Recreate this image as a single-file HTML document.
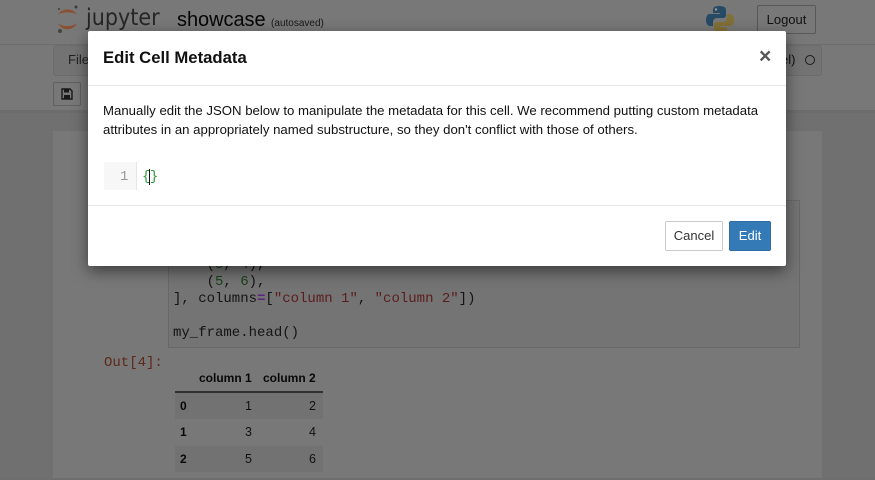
<!DOCTYPE html>
<html>
<head>
<meta charset="utf-8">
<style>
html,body{margin:0;padding:0;width:875px;height:480px;overflow:hidden;background:#707070;font-family:"Liberation Sans",sans-serif;}
.a{position:absolute;box-sizing:border-box;}
.mono{font-family:"Liberation Mono",monospace;font-size:14px;line-height:17px;white-space:pre;color:#141414;}
.t{font-size:12.500px;line-height:15px;color:#111;}
.b{font-size:12px;line-height:15px;font-weight:bold;color:#080808;}
</style>
</head>
<body>
<!-- background notebook -->
<div class="a" style="left:0;top:0;width:875px;height:111px;background:#787878;"></div>
<div class="a" style="left:0;top:44px;width:875px;height:1px;background:#6e6e6e;"></div>
<div class="a" style="left:0;top:110px;width:875px;height:3px;background:#6c6c6c;"></div>
<div class="a" style="left:53px;top:131px;width:769px;height:349px;background:#787878;"></div>

<!-- logo -->
<svg class="a" style="left:55px;top:4px" width="32" height="32" viewBox="0 0 32 32">
<path d="M3 11 C7 3.500 18 3.500 22 11 C18 7.500 7 7.500 3 11Z" fill="#8a5030"/>
<path d="M3 19 C7 27.500 18 27.500 22 19 C18 23 7 23 3 19Z" fill="#8a5030"/>
<circle cx="21" cy="3" r="1.500" fill="#3c3c3c"/>
<circle cx="4" cy="5" r="1" fill="#3c3c3c"/>
<circle cx="5" cy="27" r="2" fill="#444"/>
</svg>
<div class="a" style="left:86px;top:2px;font-size:23px;line-height:32px;color:#262626;font-family:'DejaVu Sans',sans-serif;transform:scaleX(.9);transform-origin:0 0;white-space:nowrap;">jupyter</div>
<div class="a" style="left:177px;top:7px;font-size:20px;line-height:26px;color:#050505;white-space:nowrap;letter-spacing:-.05px;">showcase <span style="font-size:10px;color:#181818;letter-spacing:0;">(autosaved)</span></div>

<!-- python logo -->
<svg class="a" style="left:705px;top:5px" width="30" height="30" viewBox="0 0 30 30">
<path d="M14 1 C9 1 8 3 8 5 V8 H15 V9 H5 C2 9 1 12 1 15 C1 19 3 21 5 21 H8 V17 C8 14.500 10 13 12 13 H18 C20 13 21 12 21 10 V5 C21 2 18 1 14 1Z" fill="#274a64"/>
<path d="M16 29 C21 29 22 27 22 25 V22 H15 V21 H25 C28 21 29 18 29 15 C29 11 27 9 25 9 H22 V13 C22 15.500 20 17 18 17 H12 C10 17 9 18 9 20 V25 C9 28 12 29 16 29Z" fill="#807036"/>
<circle cx="11" cy="4.500" r="1.200" fill="#999"/>
</svg>
<div class="a" style="left:757px;top:5px;width:59px;height:29px;border:1px solid #585858;border-radius:2px;font-size:13px;line-height:27px;text-align:center;color:#111;">Logout</div>

<!-- menu bar -->
<div class="a" style="left:53px;top:45px;width:769px;height:31px;background:#737373;border:1px solid #6c6c6c;border-radius:3px;"></div>
<div class="a" style="left:68px;top:52px;font-size:13px;line-height:16px;color:#222;">File</div>
<div class="a" style="left:781px;top:52px;font-size:13px;line-height:16px;color:#111;">el)</div>
<div class="a" style="left:805px;top:55px;width:10px;height:10px;border:1.500px solid #1c1c1c;border-radius:50%;"></div>
<!-- save button -->
<div class="a" style="left:53px;top:82px;width:28px;height:24px;background:#787878;border:1px solid #606060;border-radius:2px;"></div>
<svg class="a" style="left:61px;top:88px" width="12" height="12" viewBox="0 0 12 12"><path d="M1 1H9L11 3V11H1Z" fill="none" stroke="#181818" stroke-width="1.400"/><path d="M3 1.500H8V4.500H3ZM3 7H9V10.500H3Z" fill="#181818"/></svg>

<!-- cell -->
<div class="a" style="left:168px;top:200px;width:632px;height:148px;background:#747474;border:1px solid #686868;"></div>
<div class="a mono" style="left:173px;top:257px;">    (<span style="color:#1a401a">3</span>, <span style="color:#1a401a">4</span>),
    (<span style="color:#1a401a">5</span>, <span style="color:#1a401a">6</span>),
], columns<span style="color:#5c2480;font-weight:bold">=</span>[<span style="color:#5c1c1c">"column 1"</span>, <span style="color:#5c1c1c">"column 2"</span>])

my_frame.head()</div>
<div class="a mono" style="left:104px;top:355px;color:#5e281a;">Out[4]:</div>

<!-- table -->
<div class="a" style="left:175px;top:391px;width:148px;height:2px;background:#303030;"></div>
<div class="a" style="left:175px;top:393px;width:148px;height:26px;background:#727272;"></div>
<div class="a" style="left:175px;top:446px;width:148px;height:26px;background:#727272;"></div>
<div class="a b" style="left:199px;top:371px;">column 1</div>
<div class="a b" style="left:263px;top:371px;">column 2</div>
<div class="a b" style="left:180px;top:399px;">0</div>
<div class="a t" style="left:245px;top:399px;">1</div>
<div class="a t" style="left:309px;top:399px;">2</div>
<div class="a b" style="left:180px;top:425px;">1</div>
<div class="a t" style="left:245px;top:425px;">3</div>
<div class="a t" style="left:309px;top:425px;">4</div>
<div class="a b" style="left:180px;top:452px;">2</div>
<div class="a t" style="left:245px;top:452px;">5</div>
<div class="a t" style="left:309px;top:452px;">6</div>
<div class="a" style="left:0;top:478px;width:875px;height:2px;background:#6e6e6e;"></div>

<!-- modal -->
<div class="a" style="left:88px;top:31px;width:698px;height:235px;background:#fff;border-radius:2px;box-shadow:0 5px 15px rgba(0,0,0,.5);">
  <div class="a" style="left:15px;top:16px;font-size:16.700px;line-height:22px;font-weight:bold;color:#111;white-space:nowrap;">Edit Cell Metadata</div>
  <div class="a" style="left:671px;top:15px;font-size:21px;line-height:21px;font-weight:bold;color:#555;">×</div>
  <div class="a" style="left:0;top:54px;width:698px;height:1px;background:#e6e6e6;"></div>
  <div class="a" style="left:15px;top:71px;width:672px;font-size:13.200px;line-height:18.500px;color:#111;">Manually edit the JSON below to manipulate the metadata for this cell. We recommend putting custom metadata attributes in an appropriately named substructure, so they don't conflict with those of others.</div>
  <div class="a" style="left:16px;top:131px;width:33px;height:28px;background:#f7f7f7;border-right:1px solid #e6e6e6;"></div>
  <div class="a" style="left:32px;top:138px;font-family:'Liberation Mono',monospace;font-size:14px;line-height:16px;color:#999;">1</div>
  <div class="a" style="left:54px;top:138px;font-family:'Liberation Mono',monospace;font-size:14px;line-height:16px;color:#2a9a3a;letter-spacing:-.5px;">{}</div>
  <div class="a" style="left:61px;top:138px;width:1px;height:16px;background:#111;"></div>
  <div class="a" style="left:0;top:174px;width:698px;height:1px;background:#e6e6e6;"></div>
  <div class="a" style="left:577px;top:190px;width:58px;height:30px;background:#fff;border:1px solid #ccc;border-radius:2px;font-size:13px;line-height:28px;text-align:center;color:#333;">Cancel</div>
  <div class="a" style="left:641px;top:190px;width:42px;height:30px;background:#337ab7;border:1px solid #2e6da4;border-radius:2px;font-size:13px;line-height:28px;text-align:center;color:#fff;">Edit</div>
</div>
</body>
</html>
